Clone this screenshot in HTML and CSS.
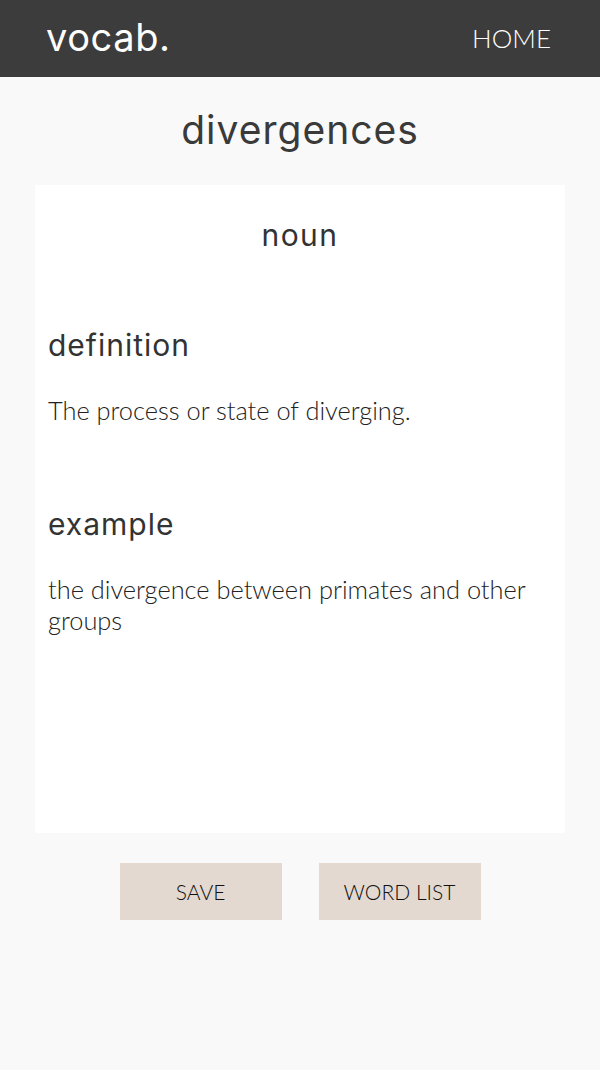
FILE: index.html
```html
<!DOCTYPE html>
<html lang="en">
<head>
<meta charset="utf-8">
<title>vocab.</title>
<link rel="stylesheet" href="styles.css">
</head>
<body>
<header class="topbar">
  <div class="logo">vocab.</div>
  <nav class="nav"><a class="nav-link" href="#">HOME</a></nav>
</header>
<main class="main">
  <h1 class="word">divergences</h1>
  <section class="card">
    <h2 class="pos">noun</h2>
    <h3 class="label label-first">definition</h3>
    <p class="text">The process or state of diverging.</p>
    <h3 class="label">example</h3>
    <p class="text">the divergence between primates and other groups</p>
  </section>
  <div class="actions">
    <button class="btn">SAVE</button>
    <button class="btn">WORD LIST</button>
  </div>
</main>
</body>
</html>
```
FILE: styles.css
```css
* { box-sizing: border-box; }
html, body { margin: 0; padding: 0; }
body {
  background: #f9f9f9;
  color: #333;
  font-family: Lato, "Liberation Sans", sans-serif;
  width: 600px;
  min-height: 1070px;
}
.topbar {
  height: 77px;
  background: #3c3c3c;
  display: flex;
  align-items: center;
  justify-content: space-between;
  padding: 0 49px 0 46px;
}
.logo {
  font-family: Inter, "Open Sans", sans-serif;
  font-size: 38px;
  font-weight: 400;
  color: #fff;
  letter-spacing: 0.6px;
  line-height: 1;
  margin-top: -4px;
}
.nav-link {
  display: block;
  font-family: Lato, sans-serif;
  font-weight: 300;
  font-size: 26px;
  line-height: 1;
  color: #fff;
  text-decoration: none;
  margin-top: -2px;
}
.main { display: flex; flex-direction: column; align-items: center; }
.word {
  margin: 29px 0 31px;
  font-family: Inter, "Open Sans", sans-serif;
  font-weight: 400;
  font-size: 39px;
  line-height: 48px;
  color: #3a3a3a;
  letter-spacing: 1px;
}
.card {
  width: 530px;
  height: 648px;
  background: #fff;
  padding: 33px 13px 0;
}
.pos {
  margin: 0;
  text-align: center;
  font-family: Inter, "Open Sans", sans-serif;
  font-weight: 400;
  font-size: 30px;
  line-height: 34px;
  color: #333;
  letter-spacing: 1.4px;
}
.label {
  margin: 81px 0 0;
  font-family: Inter, "Open Sans", sans-serif;
  font-weight: 400;
  font-size: 30px;
  line-height: 34px;
  color: #333;
  letter-spacing: 1px;
}
.label-first { margin-top: 76px; }
.text {
  margin: 33px 0 0;
  font-family: Lato, sans-serif;
  font-weight: 300;
  font-size: 25.4px;
  line-height: 31px;
  color: #222;
}
.actions {
  display: flex;
  gap: 37px;
  margin-top: 30px;
}
.btn {
  width: 162px;
  height: 57px;
  border: none;
  background: #e3d9d0;
  font-family: Lato, sans-serif;
  font-weight: 300;
  font-size: 21px;
  color: #111;
  padding: 0;
}
```
